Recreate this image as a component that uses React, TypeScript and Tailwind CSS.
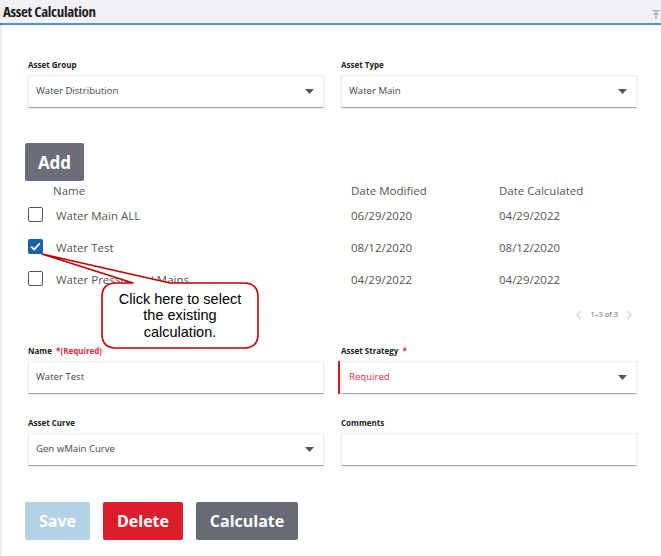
import React from "react";

function Caret() {
  return (
    <svg width="9" height="5" viewBox="0 0 9 5" className="shrink-0">
      <path d="M0 0 L9 0 L4.5 5 Z" fill="#555" />
    </svg>
  );
}

function Label({ children }: { children: React.ReactNode }) {
  return <div className="h-[12px] leading-[12px] text-[8px] font-bold text-[#222]">{children}</div>;
}

function Box({ children, caret, red }: { children?: React.ReactNode; caret?: boolean; red?: boolean }) {
  return (
    <div className="relative mt-[4px] h-[33px] bg-white border border-[#ececec] border-b-[#a3a3a3] shadow-[0_1px_2px_rgba(0,0,0,0.08)] flex items-center justify-between pl-[7px] pr-[9px]">
      {red && <div className="absolute left-[-4px] top-[-1px] bottom-[-1px] w-[2px] bg-[#d51b2a]" />}
      <span className={"text-[9.6px] " + (red ? "text-[#e0303c]" : "text-[#444]")}>{children}</span>
      {caret && <Caret />}
    </div>
  );
}

function CheckBox({ checked }: { checked?: boolean }) {
  if (checked) {
    return (
      <div className="w-[15px] h-[15px] rounded-[2px] bg-[#1762a8] flex items-center justify-center">
        <svg width="11" height="9" viewBox="0 0 11 9">
          <path d="M1.2 4.6 L4.2 7.4 L9.8 1.4" stroke="white" strokeWidth="1.8" fill="none" />
        </svg>
      </div>
    );
  }
  return <div className="w-[15px] h-[15px] rounded-[2px] border-[1.5px] border-[#555] bg-white" />;
}

const rows = [
  { name: "Water Main ALL", mod: "06/29/2020", calc: "04/29/2022", checked: false },
  { name: "Water Test", mod: "08/12/2020", calc: "08/12/2020", checked: true },
  { name: "Water Pressurized Mains", mod: "04/29/2022", calc: "04/29/2022", checked: false },
];

export default function App() {
  return (
    <div className="relative w-[661px] h-[556px] bg-white flex flex-col overflow-hidden font-['Open_Sans',sans-serif]">
      {/* header */}
      <div className="h-[23px] bg-[#f1f0f5] flex items-center justify-between pl-[3px] pr-[1px]">
        <span className="text-[15px] leading-[18px] font-bold text-[#1e1e1e] font-stretch-condensed tracking-[-0.35px] mt-[-2px]">Asset Calculation</span>
        <svg width="8" height="9" viewBox="0 0 8 9" className="mt-[5px]">
          <path d="M0.5 0.8 H7.5" stroke="#888" strokeWidth="1" />
          <path d="M4 8.5 V2.5 M1.8 4.8 L4 2.5 L6.2 4.8" stroke="#888" strokeWidth="1" fill="none" />
        </svg>
      </div>
      <div className="flex h-[2px]">
        <div className="w-[2px] bg-[#2f7fd0]" />
        <div className="flex-1 bg-[#4a98e4]" />
      </div>
      {/* body */}
      <div className="flex flex-1">
        <div className="w-[2px] bg-[#eeedf2]" />
        <div className="flex-1 pl-[23px] pr-[24px] pt-[34px] flex flex-col">
          <div className="ml-[3px] grid grid-cols-[296px_296px] gap-x-[17px]">
            <div>
              <Label>Asset Group</Label>
              <div className="mt-[1px]" />
              <Box caret>Water Distribution</Box>
            </div>
            <div>
              <Label>Asset Type</Label>
              <div className="mt-[1px]" />
              <Box caret>Water Main</Box>
            </div>
          </div>

          <div className="mt-[35px] flex">
            <button className="w-[59px] h-[38px] rounded-[2px] bg-[#6b6e78] text-white text-[17px] font-bold leading-none">Add</button>
          </div>

          {/* table */}
          <div className="ml-[3px] text-[11.5px] text-[#555]">
            <div className="h-[19px] grid grid-cols-[323px_148px_1fr] items-center">
              <div className="pl-[25px]">Name</div>
              <div>Date Modified</div>
              <div>Date Calculated</div>
            </div>
            {rows.map((r) => (
              <div key={r.name} className="h-[32px] grid grid-cols-[323px_148px_1fr] items-center">
                <div className="flex items-center">
                  <div className="mt-[-3px]">
                    <CheckBox checked={r.checked} />
                  </div>
                  <span className="ml-[13px]">{r.name}</span>
                </div>
                <div>{r.mod}</div>
                <div>{r.calc}</div>
              </div>
            ))}
          </div>

          <div className="mt-[9px] h-[20px] flex items-center justify-end pr-[5px] text-[7.5px] text-[#666]">
            <svg width="6" height="10" viewBox="0 0 6 10">
              <path d="M5 1 L1 5 L5 9" stroke="#d3d3d3" strokeWidth="1.2" fill="none" />
            </svg>
            <span className="mx-[8px]">1–3 of 3</span>
            <svg width="6" height="10" viewBox="0 0 6 10">
              <path d="M1 1 L5 5 L1 9" stroke="#d3d3d3" strokeWidth="1.2" fill="none" />
            </svg>
          </div>

          <div className="mt-[20px] ml-[3px] grid grid-cols-[296px_296px] gap-x-[17px] gap-y-[23px]">
            <div>
              <Label>
                Name&nbsp; <span className="text-[#e3293a]">*(Required)</span>
              </Label>
              <Box>Water Test</Box>
            </div>
            <div>
              <Label>
                Asset Strategy&nbsp; <span className="text-[#e3293a]">*</span>
              </Label>
              <Box caret red>Required</Box>
            </div>
            <div>
              <Label>Asset Curve</Label>
              <Box caret>Gen wMain Curve</Box>
            </div>
            <div>
              <Label>Comments</Label>
              <Box />
            </div>
          </div>

          <div className="mt-[36px] flex gap-[13px]">
            <button className="w-[65px] h-[38px] rounded-[2px] bg-[#b4d2e6] text-white text-[16px] font-bold">Save</button>
            <button className="w-[80px] h-[38px] rounded-[2px] bg-[#dc1e2c] text-white text-[16px] font-bold">Delete</button>
            <button className="w-[102px] h-[38px] rounded-[2px] bg-[#676b75] text-white text-[16px] font-bold">Calculate</button>
          </div>
        </div>
      </div>

      {/* callout overlay */}
      <svg className="absolute left-[30px] top-[245px]" width="235" height="110" viewBox="0 0 235 110">
        <path
          d="M86 38 L103 38 L12 9 L140 38 L214 38 Q228 38 228 52 L228 89 Q228 103 214 103 L86 103 Q72 103 72 89 L72 52 Q72 38 86 38 Z"
          fill="white"
          stroke="#c00000"
          strokeWidth="1.6"
          strokeLinejoin="round"
        />
      </svg>
      <div className="absolute left-[102px] top-[283px] w-[156px] h-[65px] flex items-center justify-center text-center font-['Liberation_Sans',Arial,sans-serif] text-[14.5px] leading-[16.5px] text-black">
        <div>
          Click here to select
          <br />
          the existing
          <br />
          calculation.
        </div>
      </div>
    </div>
  );
}
